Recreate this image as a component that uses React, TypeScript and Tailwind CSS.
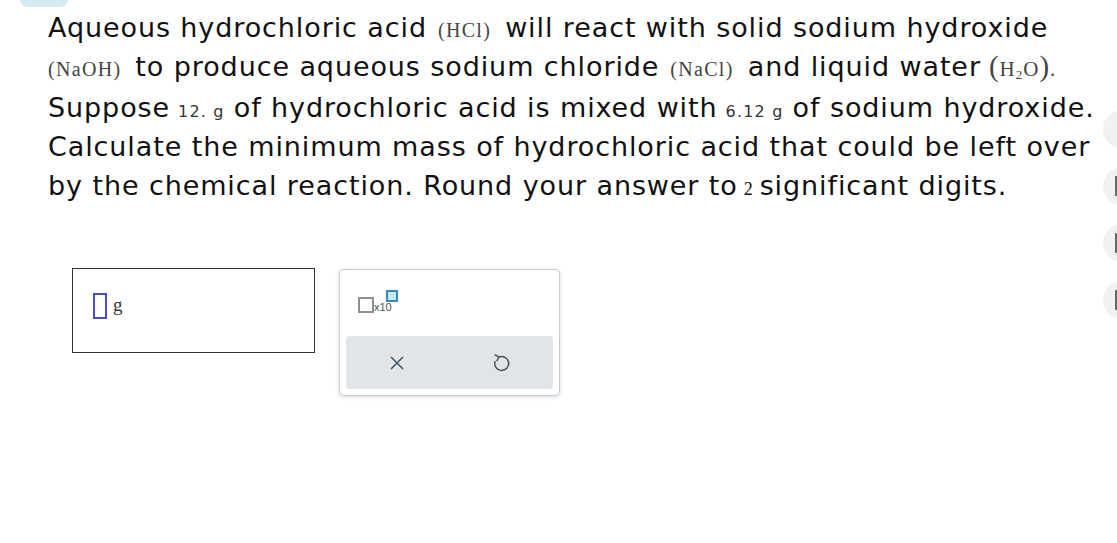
import React from "react"

const serif = "[font-family:'Liberation_Serif','Times_New_Roman',serif]"

function Formula({ children, first = false }: { children: React.ReactNode; first?: boolean }) {
  return (
    <span
      className={`${serif} text-[20px] leading-none tracking-[1.3px] text-[#444] mr-[14px] ${first ? "ml-0" : "ml-[11px]"}`}
    >
      ({children})
    </span>
  )
}

function Qty({ children }: { children: React.ReactNode }) {
  return <span className="text-[16px] leading-none tracking-[1.2px] text-[#333] ml-[8px] mr-[9px]">{children}</span>
}

export default function App() {
  return (
    <div className="relative w-[1117px] h-[543px] bg-white overflow-hidden [font-family:'DejaVu_Sans',Verdana,sans-serif] text-[#111]">
      {/* tab stub at top */}
      <div className="absolute left-[20px] -top-[10px] h-[17px] w-[48px] rounded-[8px] bg-[#d5ebf2]" />

      {/* side buttons, cut off by the window */}
      <div className="absolute right-[-24px] top-[110px] flex flex-col gap-[19px]">
        <div className="h-[38px] w-[38px] rounded-full bg-[#f1f1f1]" />
        {[0, 1, 2].map((i) => (
          <div key={i} className="relative h-[38px] w-[38px] rounded-full bg-[#f1f1f1]">
            <div className="absolute left-[12px] top-[9px] h-[20px] w-[4px] rounded-[1px] bg-[#666]" />
          </div>
        ))}
      </div>

      <div className="pl-[48px] pt-[8px] text-[27px] leading-[39px] tracking-[0.9px]">
        <p>
          Aqueous hydrochloric acid<Formula>HCl</Formula>will react with solid sodium hydroxide
          <br />
          <Formula first>NaOH</Formula>to produce aqueous sodium chloride<Formula>NaCl</Formula>and liquid water
          <span className={`${serif} text-[21px] leading-none tracking-[1px] text-[#444] ml-[8px]`}>
            <span className="text-[29px]">(</span>H<sub className="text-[13px]">2</sub>O<span className="text-[29px]">)</span>.
          </span>
        </p>
        <p className="mt-[2px]">
          Suppose<Qty>12. g</Qty>of hydrochloric acid is mixed with<Qty>6.12 g</Qty>of sodium hydroxide.
          <br />
          Calculate the minimum mass of hydrochloric acid that could be left over
          <br />
          by the chemical reaction. Round your answer to
          <span className={`${serif} text-[18px] leading-none mx-[6px]`}>2</span>
          significant digits.
        </p>
      </div>

      <div className="flex items-start gap-[24px] pl-[72px] pt-[63px]">
        {/* answer box */}
        <div className="flex h-[85px] w-[243px] items-center border border-[#333] pb-[10px] pl-[20px]">
          <div className="h-[26px] w-[14px] border-2 border-[#4a4ad0]" />
          <span className={`${serif} ml-[6px] text-[19px] text-[#333]`}>g</span>
        </div>

        {/* keypad */}
        <div className="mt-[1px] w-[221px] rounded-[5px] border border-[#c9cdd1] bg-white px-[6px] pb-[6px] pt-[19px] shadow-[0_1px_4px_rgba(0,0,0,0.15)]">
          <div className="flex h-[47px] items-start pl-[12px]">
            <div className="relative mt-[8px] flex items-end">
              <div className="h-[16px] w-[16px] border-2 border-[#8a9095]" />
              <span className="[font-family:'Liberation_Sans',Arial,sans-serif] text-[11px] leading-[11px] text-[#555]">x10</span>
              <div className="absolute left-[28px] -top-[7px] h-[12px] w-[12px] border-2 border-[#3a8cb0] bg-[#c8eaf5]" />
            </div>
          </div>
          <div className="flex h-[53px] items-center justify-around rounded-[4px] bg-[#e1e5e8]">
            <svg width="16" height="16" viewBox="0 0 16 16">
              <path d="M2 2 L14 14 M14 2 L2 14" stroke="#4b5560" strokeWidth="1.6" fill="none" />
            </svg>
            <svg width="18" height="20" viewBox="0 0 18 20">
              <path d="M7 4 A7 7 0 1 1 3 8.5" stroke="#4b5560" strokeWidth="1.5" fill="none" strokeLinecap="round" />
              <path d="M3.2 2 L7 4 L5 7.6" stroke="#4b5560" strokeWidth="1.5" fill="none" strokeLinecap="round" strokeLinejoin="round" />
            </svg>
          </div>
        </div>
      </div>
    </div>
  )
}
